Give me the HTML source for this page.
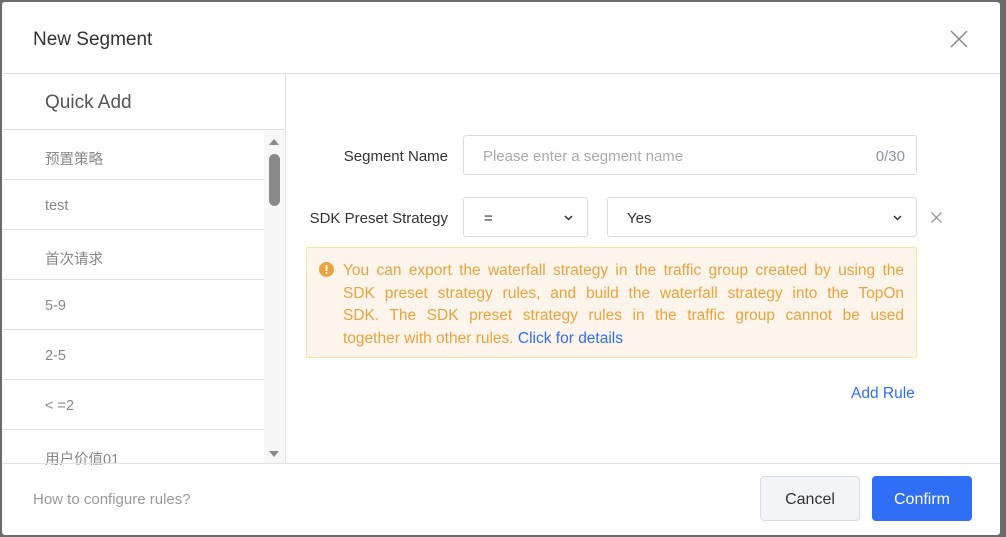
<!DOCTYPE html>
<html><head><style>
*{box-sizing:border-box;margin:0;padding:0}
body{width:1006px;height:537px;background:#6b6b6b;font-family:"Liberation Sans","Noto Sans CJK SC",sans-serif;position:relative;overflow:hidden}
.m{position:absolute;left:2px;top:2px;width:998px;height:533px;background:#fff;border-radius:3px}
.t{position:absolute;left:31px;top:27px;font-size:19px;color:#333}
.x{position:absolute;left:948px;top:28px}
.hr{position:absolute;left:0;right:0;height:1px;background:#e3e3e6}
.lp{position:absolute;left:0;top:72px;width:284px;height:389px;border-right:1px solid #e3e3e6}
.qa{height:56px;border-bottom:1px solid #e3e3e6;font-size:19px;color:#555;padding:18px 0 0 43px}
.it{height:50px;border-bottom:1px solid #e3e3e6;width:262px;font-size:14.5px;color:#888;padding:18px 0 0 43px}
.sb{position:absolute;left:262px;top:57px;width:21px;height:332px;background:#f7f7f7}
.lab{position:absolute;font-size:15px;color:#333;text-align:right}
.in{position:absolute;border:1px solid #dcdde3;border-radius:3px;height:40px;font-size:15px}
.al{position:absolute;left:304px;top:245px;width:611px;height:111px;background:#fdf5eb;border:1px solid #fce2a5;border-radius:2px;padding:12px 12px 0 36px;font-size:15.5px;line-height:22.7px;color:#eba33f}
.al div{text-align:justify;text-align-last:justify;white-space:nowrap}
.al div.l{text-align-last:left}
.btn{position:absolute;top:474px;width:100px;height:45px;border-radius:4px;font-size:16px;text-align:center;line-height:47px}
</style></head><body>
<div class="m">
<div class="t">New Segment</div>
<svg class="x" width="18" height="18" viewBox="0 0 18 18"><path d="M1 1L17 17M17 1L1 17" stroke="#888" stroke-width="1.5"/></svg>
<div class="hr" style="top:71px"></div>
<div class="lp">
<div class="qa">Quick Add</div>
<div class="it">预置策略</div>
<div class="it">test</div>
<div class="it">首次请求</div>
<div class="it">5-9</div>
<div class="it">2-5</div>
<div class="it">&lt; =2</div>
<div class="it" style="border:none">用户价值01</div>
<div class="sb">
<div style="position:absolute;left:5px;top:8px;border:5px solid transparent;border-bottom:6px solid #888;border-top:0"></div>
<div style="position:absolute;left:5px;top:23px;width:11px;height:52px;border-radius:6px;background:#8a8a8a"></div>
<div style="position:absolute;left:5px;top:320px;border:5px solid transparent;border-top:6px solid #888;border-bottom:0"></div>
</div>
</div>
<div class="lab" style="left:290px;top:146px;width:156px">Segment Name</div>
<div class="in" style="left:461px;top:133px;width:454px;color:#aaa;padding:12px 0 0 19px">Please enter a segment name<span style="position:absolute;right:11px;top:12px;color:#8a93a8">0/30</span></div>
<div class="lab" style="left:290px;top:208px;width:156px">SDK Preset Strategy</div>
<div class="in" style="left:461px;top:195px;width:125px;color:#333;padding:12px 0 0 20px">=<svg style="position:absolute;right:14px;top:17px" width="9" height="6" viewBox="0 0 9 6"><path d="M1 1l3.5 3.5L8 1" stroke="#333" stroke-width="1.5" fill="none"/></svg></div>
<div class="in" style="left:605px;top:195px;width:310px;color:#333;padding:12px 0 0 19px">Yes<svg style="position:absolute;right:14px;top:17px" width="9" height="6" viewBox="0 0 9 6"><path d="M1 1l3.5 3.5L8 1" stroke="#333" stroke-width="1.5" fill="none"/></svg></div>
<svg style="position:absolute;left:929px;top:210px" width="11" height="11" viewBox="0 0 11 11"><path d="M0.5 0.5L10.5 10.5M10.5 0.5L0.5 10.5" stroke="#888" stroke-width="1.2"/></svg>
<div class="al"><svg style="position:absolute;left:12px;top:14px" width="15" height="15" viewBox="0 0 15 15"><circle cx="7.5" cy="7.5" r="7.5" fill="#eba33f"/><rect x="6.6" y="3" width="1.8" height="6" fill="#fff"/><rect x="6.6" y="10" width="1.8" height="1.8" fill="#fff"/></svg>
<div>You can export the waterfall strategy in the traffic group created by using the</div>
<div>SDK preset strategy rules, and build the waterfall strategy into the TopOn</div>
<div>SDK. The SDK preset strategy rules in the traffic group cannot be used</div>
<div class="l">together with other rules. <span style="color:#2f6ef5">Click for details</span></div>
</div>
<div style="position:absolute;left:849px;top:383px;font-size:15.5px;color:#2f6ef5">Add Rule</div>
<div class="hr" style="top:461px"></div>
<div style="position:absolute;left:31px;top:489px;font-size:15px;color:#999">How to configure rules?</div>
<div class="btn" style="left:758px;background:#f3f4f7;border:1px solid #dcdde3;color:#333;line-height:45px">Cancel</div>
<div class="btn" style="left:870px;background:#2f6ef5;color:#fff">Confirm</div>
</div>
</body></html>
